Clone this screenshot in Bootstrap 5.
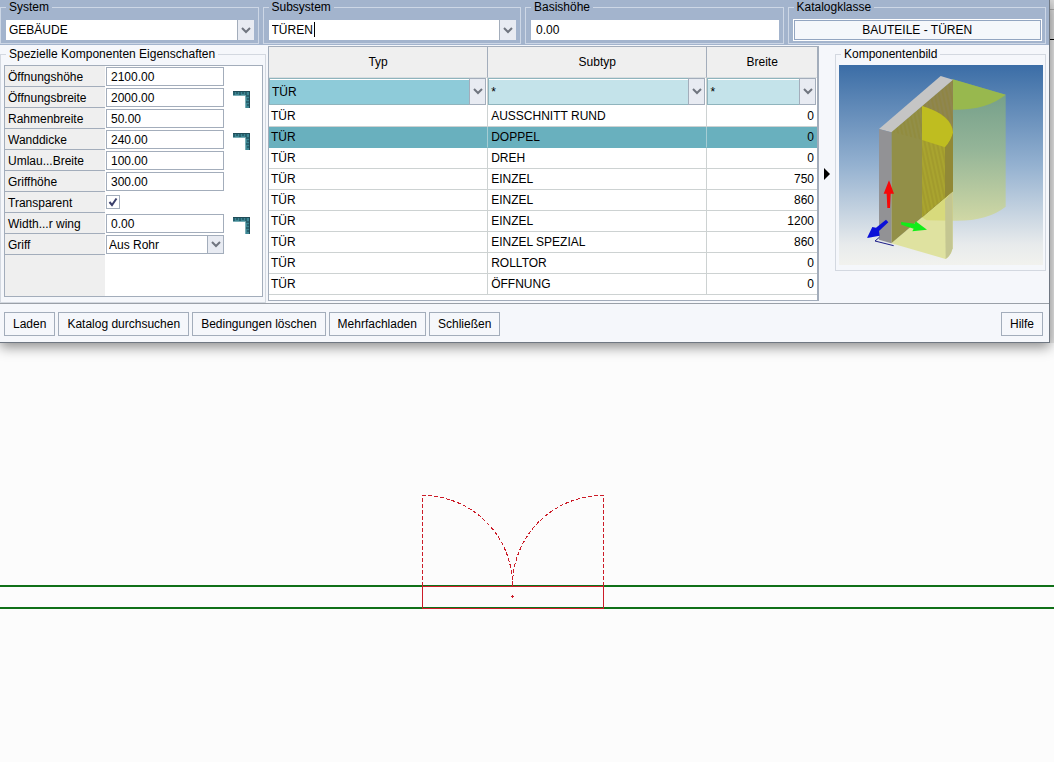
<!DOCTYPE html>
<html lang="de">
<head>
<meta charset="utf-8">
<meta name="viewport" content="width=device-width, initial-scale=1">
<title>Bauteile - Türen</title>
<link href="https://cdn.jsdelivr.net/npm/bootstrap@5.3.0/dist/css/bootstrap.min.css" rel="stylesheet">
<style>
  :root { --line: #a3adbb; --bar: #a3b4cd; --panel: #f5f7fb; }
  body { font-family: "Liberation Sans", Arial, sans-serif; font-size: 12px; line-height: 14px; color: #000; background: #fcfcfc; }
  .catalog-window { background: var(--panel); border-right: 1px solid #6f7782; border-bottom: 1px solid #6f7782; box-shadow: 0 4px 12px rgba(0,0,0,.45); min-width: 0; z-index: 1; }
  .edge-strip { width: 4px; background: linear-gradient(#dcdcdc 0 9px, #aaa 9px 10px, #dcdcdc 10px 39px, #000 39px 40px, #e8e8e8 40px); }
  .top-bar { display: grid; grid-template-columns: repeat(4, minmax(0, 1fr)); gap: 4px; padding-right: 3px; height: 45px; background: var(--bar); }
  .titled { border: 1px solid #cdd7e6; min-width: 0; }
  .titled > legend { float: none; width: auto; margin: 0 0 0 5px; padding: 0 3px; font-size: 12px; line-height: 14px; color: #000; }
  .top-bar .titled { height: 44px; padding: 6px 4px 0 5px; }
  .top-bar .titled > legend { margin-left: 0; }
  .pane { border-color: #d3d8e0; margin-top: 1px; }
  .pane > legend { margin-left: 2px; }
  .field { display: block; width: 100%; height: 19px; border: 1px solid var(--line); border-radius: 0; padding: 0 4px; font-size: 12px; line-height: 14px; color: #000; background: #fff; outline: 0; appearance: none; }
  .top-bar .field { border-color: #fff; padding: 0 2px; height: 20px; }
  .combo { position: relative; }
  .combo .field { padding-left: 2px; padding-right: 18px; }
  .drop { position: absolute; top: 0; right: 0; width: 17px; height: 100%; padding: 0; border: 1px solid var(--line); background: #e8ebf2; display: flex; align-items: center; justify-content: center; pointer-events: none; }
  .top-bar .drop { border-width: 0 0 0 1px; }
  .caret-bar { position: absolute; left: 45px; top: 2px; width: 1px; height: 15px; background: #000; }
  .class-btn { width: 100%; height: 20px; padding: 0; border: 1px solid #93a5c1; outline: 1px solid #fff; background: var(--panel); }
  .work { display: grid; grid-template-columns: 268px minmax(0, 1fr) 230px; height: 258px; padding-top: 1px; }
  .props-pane { margin-right: 2px; padding: 4px 2px 0 3px; }
  .props { border: 1px solid var(--line); background: #fff; height: 232px; }
  .prop-row { display: grid; grid-template-columns: 100px 118px 1fr; column-gap: 1px; height: 21px; }
  .prop-row > label { background: #efefef; border-bottom: 1px solid var(--line); padding: 4px 3px 0; }
  .prop-row > .slot { padding-top: 1px; }
  .filler { width: 100px; background: #efefef; }
  .check { appearance: none; display: grid; width: 14px; height: 14px; margin: 2px 0 0; border: 1px solid var(--line); background: #fff; }
  .tick { position: absolute; left: 2px; top: 5px; pointer-events: none; }
  .hits { border: 1px solid var(--line); border-right-width: 2px; background: #fff; height: 255px; }
  .hits table { width: 100%; table-layout: fixed; border-collapse: separate; border-spacing: 0; }
  .hits th { height: 31px; background: #efefef; font-weight: 400; text-align: center; border-right: 1px solid var(--line); border-bottom: 1px solid #d8dde0; padding: 0; }
  .hits td { height: 21px; padding: 0 3px 0 2px; line-height: 14px; border-right: 1px solid #cdd2d2; border-bottom: 1px solid #cdd2d2; vertical-align: middle; }
  .hits td + td { padding-left: 3px; }
  .hits th:last-child, .hits td:last-child { border-right: 0; }
  .hits .filters td { height: 28px; padding: 0 1px 1px 0; border-bottom: 0; }
  .hits .filters .field { height: 27px; background: #c4e3ea; border-color: #8fb4bd; box-shadow: inset 0 1px #fff; }
  .hits .filters td:first-child .field { background: #8ecbd9; }
  .hits .picked td { background: #69b0be; border-color: #a5cdd4; border-bottom-color: #69b0be; }
  .preview { height: 224px; padding: 4px 2px 0 3px; margin-right: 3px; }
  .splitter { width: 16px; padding: 122px 0 0 5px; }
  .actions { border-top: 1px solid #9aa0a8; padding: 8px 6px 6px 4px; gap: 3px; }
  .act { height: 24px; padding: 0 8px; border: 1px solid var(--line); background: var(--panel); white-space: nowrap; }
  .plan { min-height: 300px; }
</style>
</head>
<body class="d-flex flex-column min-vh-100">

<svg width="0" height="0" class="position-absolute" aria-hidden="true">
  <symbol id="chevron" viewBox="0 0 10 7"><path d="M1 1l4 4 4-4" fill="none" stroke="#70757f" stroke-width="2"/></symbol>
  <symbol id="ruler" viewBox="0 0 17 17">
    <path d="M0 0h17v17h-5V5H0z" fill="#3d8794"/>
    <path d="M0 0h17v17h-1V1H0z" fill="#1f4c58"/>
    <path d="M1 1v3M4 1v2M7 1v3M10 1v2M13 1v3M16 5h-3M16 8h-2M16 11h-3M16 14h-2" stroke="#173c49"/>
    <path d="M0 4.500h12.500V17" fill="none" stroke="#79adb5"/>
  </symbol>
</svg>

<div class="d-flex">
  <main class="catalog-window flex-fill position-relative">
    <div class="top-bar">
      <fieldset class="titled">
        <legend>System</legend>
        <div class="combo">
          <select class="field" aria-label="System"><option>GEBÄUDE</option></select>
          <span class="drop"><svg width="10" height="7"><use href="#chevron"/></svg></span>
        </div>
      </fieldset>
      <fieldset class="titled">
        <legend>Subsystem</legend>
        <div class="combo">
          <input class="field" type="text" value="TÜREN" aria-label="Subsystem">
          <span class="caret-bar"></span>
          <button type="button" class="drop" aria-label="Subsystem wählen"><svg width="10" height="7"><use href="#chevron"/></svg></button>
        </div>
      </fieldset>
      <fieldset class="titled">
        <legend>Basishöhe</legend>
        <input class="field px-1" type="text" value="0.00" aria-label="Basishöhe">
      </fieldset>
      <fieldset class="titled">
        <legend>Katalogklasse</legend>
        <button type="button" class="class-btn">BAUTEILE - TÜREN</button>
      </fieldset>
    </div>

    <div class="work">
      <fieldset class="titled pane props-pane">
        <legend>Spezielle Komponenten Eigenschaften</legend>
        <div class="props d-flex flex-column">
          <div class="prop-row"><label for="p1">Öffnungshöhe</label><div class="slot"><input id="p1" class="field" value="2100.00"></div></div>
          <div class="prop-row"><label for="p2">Öffnungsbreite</label><div class="slot"><input id="p2" class="field" value="2000.00"></div><svg class="ms-2 mt-1" width="17" height="17"><use href="#ruler"/></svg></div>
          <div class="prop-row"><label for="p3">Rahmenbreite</label><div class="slot"><input id="p3" class="field" value="50.00"></div></div>
          <div class="prop-row"><label for="p4">Wanddicke</label><div class="slot"><input id="p4" class="field" value="240.00"></div><svg class="ms-2 mt-1" width="17" height="17"><use href="#ruler"/></svg></div>
          <div class="prop-row"><label for="p5">Umlau...Breite</label><div class="slot"><input id="p5" class="field" value="100.00"></div></div>
          <div class="prop-row"><label for="p6">Griffhöhe</label><div class="slot"><input id="p6" class="field" value="300.00"></div></div>
          <div class="prop-row"><label for="p7">Transparent</label><div class="slot position-relative"><input id="p7" type="checkbox" class="check" checked><svg class="tick" width="10" height="10" viewBox="0 0 10 10"><path d="M1.500 5l2.500 3L8.500 1.500" fill="none" stroke="#3b3f6b" stroke-width="2"/></svg></div></div>
          <div class="prop-row"><label for="p8">Width...r wing</label><div class="slot"><input id="p8" class="field" value="0.00"></div><svg class="ms-2 mt-1" width="17" height="17"><use href="#ruler"/></svg></div>
          <div class="prop-row"><label for="p9">Griff</label><div class="slot"><div class="combo"><select id="p9" class="field"><option>Aus Rohr</option></select><span class="drop"><svg width="10" height="7"><use href="#chevron"/></svg></span></div></div></div>
          <div class="filler flex-fill"></div>
        </div>
      </fieldset>

      <div class="hits">
        <table>
          <colgroup><col style="width:40%"><col style="width:40%"><col style="width:20%"></colgroup>
          <thead>
            <tr><th scope="col">Typ</th><th scope="col">Subtyp</th><th scope="col">Breite</th></tr>
            <tr class="filters">
              <td><div class="combo"><select class="field" aria-label="Typ"><option>TÜR</option></select><span class="drop"><svg width="10" height="7"><use href="#chevron"/></svg></span></div></td>
              <td class="ps-0"><div class="combo"><select class="field" aria-label="Subtyp"><option>*</option></select><span class="drop"><svg width="10" height="7"><use href="#chevron"/></svg></span></div></td>
              <td class="ps-0"><div class="combo"><select class="field" aria-label="Breite"><option>*</option></select><span class="drop"><svg width="10" height="7"><use href="#chevron"/></svg></span></div></td>
            </tr>
          </thead>
          <tbody>
            <tr><td>TÜR</td><td>AUSSCHNITT RUND</td><td class="text-end">0</td></tr>
            <tr class="picked"><td>TÜR</td><td>DOPPEL</td><td class="text-end">0</td></tr>
            <tr><td>TÜR</td><td>DREH</td><td class="text-end">0</td></tr>
            <tr><td>TÜR</td><td>EINZEL</td><td class="text-end">750</td></tr>
            <tr><td>TÜR</td><td>EINZEL</td><td class="text-end">860</td></tr>
            <tr><td>TÜR</td><td>EINZEL</td><td class="text-end">1200</td></tr>
            <tr><td>TÜR</td><td>EINZEL SPEZIAL</td><td class="text-end">860</td></tr>
            <tr><td>TÜR</td><td>ROLLTOR</td><td class="text-end">0</td></tr>
            <tr><td>TÜR</td><td>ÖFFNUNG</td><td class="text-end">0</td></tr>
          </tbody>
        </table>
      </div>

      <div class="d-flex align-items-start">
        <div class="splitter flex-shrink-0"><svg class="d-block" width="6" height="12"><path d="M0 0l6 6-6 6z"/></svg></div>
        <fieldset class="titled pane preview flex-fill">
          <legend>Komponentenbild</legend>
          <svg class="d-block w-100" height="200" viewBox="57 75 612 600" preserveAspectRatio="none" role="img" aria-label="Doppeltür mit geöffneten Flügeln">
            <defs>
              <linearGradient id="sky" x1="0" y1="0" x2="0" y2="1"><stop offset="0" stop-color="#3b6da6"/><stop offset=".5" stop-color="#94b1d0"/><stop offset=".9" stop-color="#e8ebec"/><stop offset="1" stop-color="#f2f2ee"/></linearGradient>
              <linearGradient id="swing" x1="0" y1="0" x2="0" y2="1"><stop offset="0" stop-color="#6d9a87"/><stop offset=".5" stop-color="#95b598"/><stop offset="1" stop-color="#d0d8a5"/></linearGradient>
              <pattern id="hatch" width="12" height="60" patternUnits="userSpaceOnUse" patternTransform="rotate(-12)"><path d="M3 0v60" stroke="#8d8228" stroke-width="3" opacity=".55"/></pattern>
            </defs>
            <path d="M57 75h612v600H57z" fill="url(#sky)"/>
            <path d="M398 118L557 164V500Q500 545 398 542L306 540V200z" fill="url(#swing)"/>
            <path d="M398 118L557 164Q500 211 398 209L340 198z" fill="#98b84e"/>
            <path d="M214 610L398 453V625Q392 648 377 657z" fill="#dfe2a0"/>
            <path d="M306 532L398 453V542L320 541z" fill="#d8da7c"/>
            <path d="M375 480l23-27v172q-6 23-21 32z" fill="#c4c691"/>
            <path d="M214 275L399 119V453L214 610z" fill="#928f48"/>
            <path d="M306 198L399 119V453L306 532z" fill="#8f8650"/>
            <path d="M306 198Q398 225 399 278V453L306 532z" fill="#a9a42f"/>
            <path d="M214 275L399 119V453L306 532V300z" fill="url(#hatch)"/>
            <path d="M306 198Q395 225 399 278Q394 300 375 322L306 300z" fill="#bfbd20"/>
            <path d="M375 322Q394 300 399 278V453L375 473z" fill="#918936"/>
            <path d="M177 267L362 108L399 119L214 277z" fill="#c5c5c5"/>
            <path d="M177 267l37 10v333l-37-11z" fill="#929295"/>
            <path d="M178 592l-13 11 56 14" fill="none" stroke="#1c1d88" stroke-width="3"/>
            <path d="M207 421l15 40h-10l-2 43h-8l-2-43h-9z" fill="#f60808"/>
            <path d="M198 539l7 8-28 26 2 14-38 7 16-33 11 2z" fill="#0b10d8"/>
            <path d="M243 546l41 5 3-7 34 25-44 5 4-8-37-12z" fill="#12ed18"/>
          </svg>
        </fieldset>
      </div>
    </div>

    <div class="actions d-flex">
      <button type="button" class="act">Laden</button>
      <button type="button" class="act">Katalog durchsuchen</button>
      <button type="button" class="act">Bedingungen löschen</button>
      <button type="button" class="act">Mehrfachladen</button>
      <button type="button" class="act">Schließen</button>
      <button type="button" class="act ms-auto">Hilfe</button>
    </div>
  </main>
  <div class="edge-strip flex-shrink-0"></div>
</div>

<section class="plan flex-fill d-flex" aria-label="Grundriss">
  <svg class="w-100" height="300" role="img" aria-label="Doppeltür im Grundriss">
    <line x1="0" y1="243" x2="100%" y2="243" stroke="#107018" stroke-width="2"/>
    <line x1="0" y1="265" x2="100%" y2="265" stroke="#107018" stroke-width="2"/>
    <svg x="422" y="152" width="182" height="115" fill="none" stroke="#cc1c28" shape-rendering="crispEdges">
      <path d="M.5 91V.5A90 90 0 0 1 90.500 91M181.500 91V.5A90 90 0 0 0 90.500 91" stroke-dasharray="4 2"/>
      <path d="M.5 91.500h181v22H.5zM89 101.500h3M90.500 100v3"/>
    </svg>
  </svg>
</section>

<script src="https://cdn.jsdelivr.net/npm/bootstrap@5.3.0/dist/js/bootstrap.bundle.min.js"></script>
</body>
</html>
